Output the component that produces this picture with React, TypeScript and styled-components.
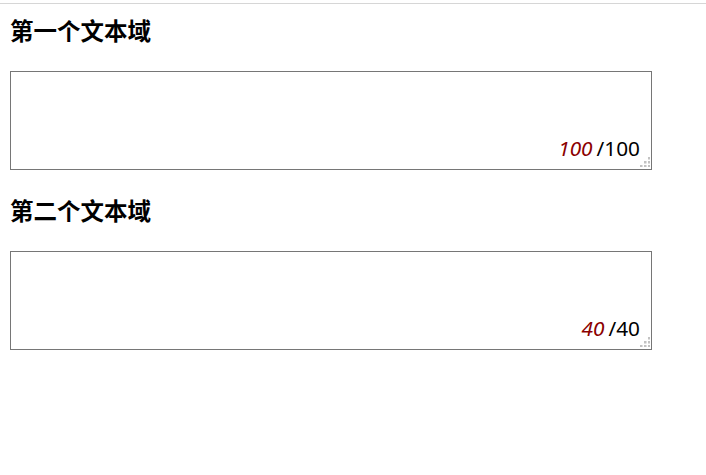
import * as React from "react";
import styled, { createGlobalStyle } from "styled-components";

const GlobalStyle = createGlobalStyle`
	html, body {
		margin: 0;
		padding: 0;
		background: #ffffff;
		font-family: "Noto Sans", "Noto Sans CJK SC", sans-serif;
	}
`;

const TopRule = styled.div`
	height: 3px;
	border-bottom: 1px solid #d6d6d6;
`;

const Page = styled.div`
	display: flex;
	flex-direction: column;
	gap: 24px;
	padding: 10px 10px 0;
`;

const Section = styled.section`
	display: flex;
	flex-direction: column;
	gap: 25px;
`;

const Title = styled.h2`
	margin: 0;
	font-family: "Noto Sans CJK SC", sans-serif;
	font-size: 23.5px;
	font-weight: 700;
	line-height: 32px;
	color: #000000;
`;

const Field = styled.div`
	position: relative;
	width: 642px;
`;

const Area = styled.textarea`
	display: block;
	box-sizing: border-box;
	width: 642px;
	height: 99px;
	margin: 0;
	padding: 2px;
	border: 1px solid #767676;
	resize: none;
	outline: none;
	font-family: "Noto Sans", sans-serif;
	font-size: 13px;
`;

const Counter = styled.div`
	position: absolute;
	right: 12px;
	bottom: 12px;
	font-family: "Noto Sans", sans-serif;
	font-size: 20.8px;
	line-height: 20px;
	color: #000000;
`;

const Left = styled.span`
	font-style: italic;
	color: #8b0000;
	margin-right: 4px;
`;

const Grip = styled.svg`
	position: absolute;
	right: 2px;
	bottom: 3px;
`;

function ResizeGrip() {
	const dots = [
		[8, 0],
		[4, 4],
		[8, 4],
		[0, 8],
		[4, 8],
		[8, 8],
	];
	return (
		<Grip width="10" height="10" viewBox="0 0 10 10">
			{dots.map(([x, y]) => (
				<rect key={`${x}-${y}`} x={x} y={y} width="2.5" height="2.5" fill="#c2c2c2" />
			))}
		</Grip>
	);
}

interface FieldProps {
	title: string;
	max: number;
}

function CountedTextarea({ title, max }: FieldProps) {
	const [value, setValue] = React.useState("");
	const left = max - value.length;
	return (
		<Section>
			<Title>{title}</Title>
			<Field>
				<Area maxLength={max} value={value} onChange={(e) => setValue(e.target.value)} />
				<Counter>
					<Left>{left}</Left>/{max}
				</Counter>
				<ResizeGrip />
			</Field>
		</Section>
	);
}

export default function App() {
	return (
		<>
			<GlobalStyle />
			<TopRule />
			<Page>
				<CountedTextarea title="第一个文本域" max={100} />
				<CountedTextarea title="第二个文本域" max={40} />
			</Page>
		</>
	);
}
